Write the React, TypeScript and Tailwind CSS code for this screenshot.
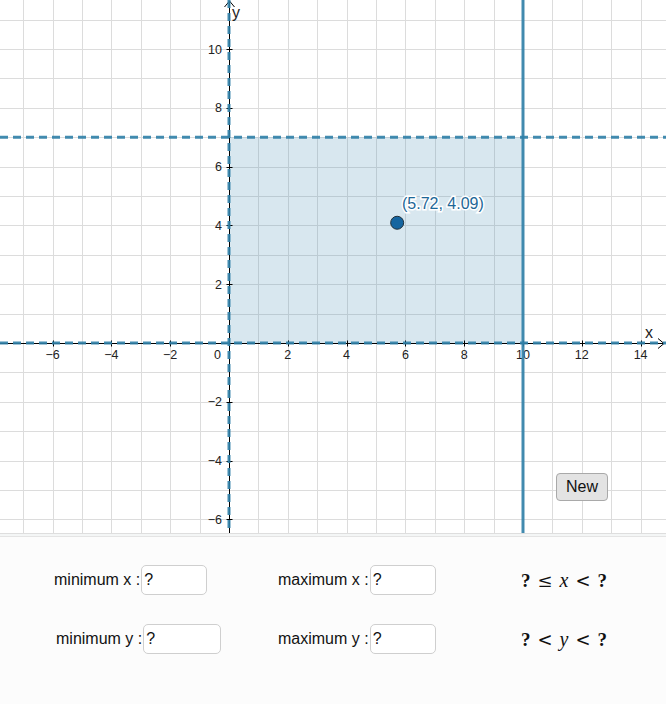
import React from "react";

const S = 29.4;
const OX = 229;
const OY = 343;
const W = 666;
const H = 533;

const px = (x: number) => OX + S * x;
const py = (y: number) => OY - S * y;
const crisp = (v: number) => Math.round(v) + 0.5;

const BLUE = "#2f7fa7";

function Graph() {
  const vLines: number[] = [];
  for (let k = -8; k <= 15; k++) {
    const x = px(k);
    if (x > 0 && x < W) vLines.push(crisp(x));
  }
  const hLines: number[] = [];
  for (let k = -7; k <= 12; k++) {
    const y = py(k);
    if (y > 0 && y < H) hLines.push(crisp(y));
  }

  const xLabels = [-6, -4, -2, 2, 4, 6, 8, 10, 12, 14];
  const yLabels = [10, 8, 6, 4, 2, -2, -4, -6];
  const ax = crisp(OX);
  const ay = crisp(OY);

  return (
    <svg width={W} height={H} className="block" style={{ fontFamily: '"Liberation Sans", Arial, sans-serif' }}>
      <rect x={0} y={0} width={W} height={H} fill="#ffffff" />
      {/* grid */}
      {vLines.map((x) => (
        <line key={"v" + x} x1={x} y1={0} x2={x} y2={H} stroke="#dcdcdc" strokeWidth={1} />
      ))}
      {hLines.map((y) => (
        <line key={"h" + y} x1={0} y1={y} x2={W} y2={y} stroke="#dcdcdc" strokeWidth={1} />
      ))}

      {/* shaded region */}
      <rect x={px(0)} y={py(7)} width={S * 10} height={S * 7} fill="#3c89ae" fillOpacity={0.2} />

      {/* axes */}
      <line x1={0} y1={ay} x2={W - 2} y2={ay} stroke="#000" strokeWidth={1} />
      <line x1={ax} y1={1} x2={ax} y2={H} stroke="#000" strokeWidth={1} />
      <polyline points={`${W - 8},${ay - 5} ${W - 2},${ay} ${W - 8},${ay + 5}`} fill="none" stroke="#000" strokeWidth={1} />
      <polyline points={`${ax - 5},${7} ${ax},${1} ${ax + 5},${7}`} fill="none" stroke="#000" strokeWidth={1} />
      {xLabels.map((v) => (
        <line key={"tx" + v} x1={crisp(px(v))} y1={ay - 3} x2={crisp(px(v))} y2={ay + 3} stroke="#000" />
      ))}
      {yLabels.map((v) => (
        <line key={"ty" + v} x1={ax - 3} y1={crisp(py(v))} x2={ax + 3} y2={crisp(py(v))} stroke="#000" />
      ))}

      {/* tick labels */}
      {xLabels.map((v) => (
        <text key={"lx" + v} x={px(v)} y={OY + 16} fontSize={12.5} fill="#222" textAnchor="middle">
          {v < 0 ? "\u2212" + Math.abs(v) : v}
        </text>
      ))}
      <text x={OX - 8} y={OY + 16} fontSize={12.5} fill="#222" textAnchor="end">0</text>
      {yLabels.map((v) => (
        <text key={"ly" + v} x={OX - 7} y={py(v) + 4.5} fontSize={12.5} fill="#222" textAnchor="end">
          {v < 0 ? "\u2212" + Math.abs(v) : v}
        </text>
      ))}
      <text x={OX + 3} y={18} fontSize={16} fill="#222">y</text>
      <text x={W - 21} y={OY - 5} fontSize={16} fill="#222">x</text>

      {/* boundary lines */}
      <line x1={px(10)} y1={0} x2={px(10)} y2={H} stroke={BLUE} strokeWidth={3} strokeOpacity={0.9} />
      <line x1={0} y1={py(7)} x2={W} y2={py(7)} stroke={BLUE} strokeWidth={3} strokeDasharray="8 5" strokeOpacity={0.9} />
      <line x1={0} y1={OY} x2={W} y2={OY} stroke={BLUE} strokeWidth={3} strokeDasharray="8 5" strokeOpacity={0.9} />
      <line x1={OX} y1={0} x2={OX} y2={H} stroke={BLUE} strokeWidth={3} strokeDasharray="8 5" strokeOpacity={0.9} />

      {/* point */}
      <circle cx={px(5.72)} cy={py(4.09)} r={6.5} fill="#1565a0" stroke="#1f2f3a" strokeWidth={1} />
      <text
        x={402}
        y={209}
        fontSize={16}
        fill="#1d6797"
        stroke="#ffffff"
        strokeWidth={3}
        paintOrder="stroke"
      >
        (5.72, 4.09)
      </text>
    </svg>
  );
}

function Field({ width, label }: { width: string; label: string }) {
  return (
    <div className="flex items-center">
      <span className="text-[16px] text-[#111]">{label}</span>
      <input
        readOnly
        defaultValue="?"
        className={`ml-px h-[30px] ${width} rounded-[5px] border border-[#cfcfcf] bg-white pl-[2px] text-[16px] text-[#111] outline-none`}
      />
    </div>
  );
}

function Inequality({ v, first }: { v: string; first: string }) {
  return (
    <div className="flex items-baseline text-[19px] text-[#111]">
      <span className="font-['Liberation_Serif',serif] font-bold">?</span>
      <span className="mx-[7px] font-['DejaVu_Serif',serif] text-[18px]">{first}</span>
      <span className="font-['Liberation_Serif',serif] text-[20px] italic">{v}</span>
      <span className="mx-[7px] font-['DejaVu_Serif',serif] text-[18px]">&lt;</span>
      <span className="font-['Liberation_Serif',serif] font-bold">?</span>
    </div>
  );
}

export default function App() {
  return (
    <div className="relative h-[704px] w-[666px] overflow-hidden bg-[#fcfcfc] font-['Liberation_Sans',Arial,sans-serif]">
      <div className="relative">
        <Graph />
        <button className="absolute left-[556px] top-[473px] h-[28px] w-[52px] rounded-[4px] border border-[#a9a9a9] bg-[#e3e3e3] text-[16px] text-[#111]">
          New
        </button>
      </div>
      <div className="h-[3px] border-t border-[#dedede] bg-[#f4f6f6]" />
      <div className="flex flex-col gap-[29px] border-t border-[#e4e4e4] pt-[28px]">
        <div className="flex h-[30px] items-center">
          <div className="w-[278px] pl-[54px]">
            <Field width="w-[66px]" label="minimum x :" />
          </div>
          <div className="w-[243px]">
            <Field width="w-[66px]" label="maximum x :" />
          </div>
          <Inequality v="x" first="≤" />
        </div>
        <div className="flex h-[30px] items-center">
          <div className="w-[278px] pl-[56px]">
            <Field width="w-[78px]" label="minimum y :" />
          </div>
          <div className="w-[243px]">
            <Field width="w-[66px]" label="maximum y :" />
          </div>
          <Inequality v="y" first="<" />
        </div>
      </div>
    </div>
  );
}
